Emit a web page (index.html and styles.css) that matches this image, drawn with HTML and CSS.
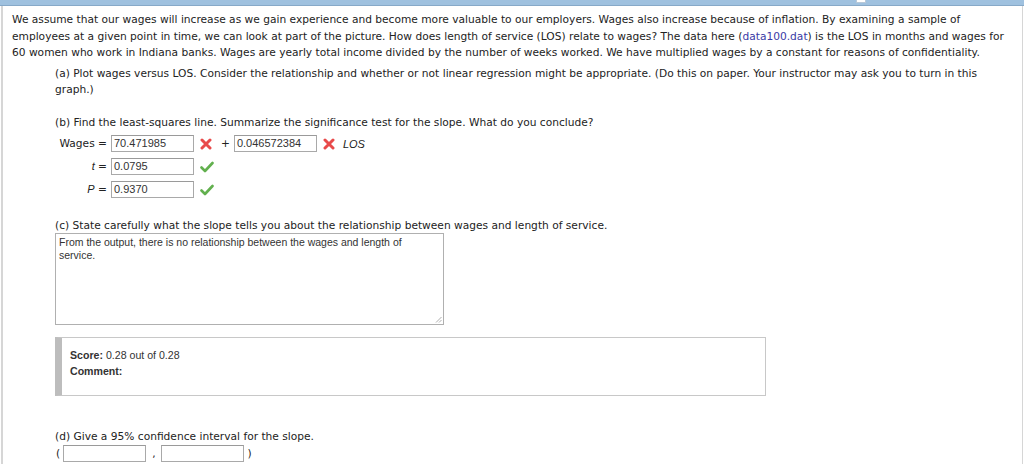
FILE: index.html
```html
<!DOCTYPE html>
<html>
<head>
<meta charset="utf-8">
<link rel="stylesheet" href="styles.css">
</head>
<body>
<div class="topbar"><span class="tab"></span></div>
<div class="frame">
  <p class="intro">We assume that our wages will increase as we gain experience and become more valuable to our employers. Wages also increase because of inflation. By examining a sample of employees at a given point in time, we can look at part of the picture. How does length of service (LOS) relate to wages? The data here (<a class="link">data100.dat</a>) is the LOS in months and wages for 60 women who work in Indiana banks. Wages are yearly total income divided by the number of weeks worked. We have multiplied wages by a constant for reasons of confidentiality.</p>

  <div class="part">
    <p class="q qa">(a) Plot wages versus LOS. Consider the relationship and whether or not linear regression might be appropriate. (Do this on paper. Your instructor may ask you to turn in this graph.)</p>

    <p class="q qb">(b) Find the least-squares line. Summarize the significance test for the slope. What do you conclude?</p>
    <div class="rows">
      <div class="row">
        <span class="lbl">Wages =</span>
        <span class="inp">70.471985</span>
        <svg class="mark" width="12" height="12" viewBox="0 0 12 12"><path d="M2 2 L10 10 M10 2 L2 10" stroke="#e84a4a" stroke-width="3" stroke-linecap="round"/></svg>
        <span class="plus">+</span>
        <span class="inp">0.046572384</span>
        <svg class="mark" width="12" height="12" viewBox="0 0 12 12"><path d="M2 2 L10 10 M10 2 L2 10" stroke="#e84a4a" stroke-width="3" stroke-linecap="round"/></svg>
        <span class="var">LOS</span>
      </div>
      <div class="row">
        <span class="lbl"><i>t</i> =</span>
        <span class="inp">0.0795</span>
        <svg class="mark chk" width="14" height="12" viewBox="0 0 14 12"><path d="M1.5 6.5 L5 10 L12.5 2" fill="none" stroke="#62b04e" stroke-width="2.6" stroke-linecap="round" stroke-linejoin="round"/></svg>
      </div>
      <div class="row">
        <span class="lbl"><i>P</i> =</span>
        <span class="inp">0.9370</span>
        <svg class="mark chk" width="14" height="12" viewBox="0 0 14 12"><path d="M1.5 6.5 L5 10 L12.5 2" fill="none" stroke="#62b04e" stroke-width="2.6" stroke-linecap="round" stroke-linejoin="round"/></svg>
      </div>
    </div>

    <p class="q qc">(c) State carefully what the slope tells you about the relationship between wages and length of service.</p>
    <div class="textarea">From the output, there is no relationship between the wages and length of service.<svg class="grip" width="7" height="7" viewBox="0 0 7 7"><path d="M6.5 1 L1 6.5 M6.5 4 L4 6.5" stroke="#999" stroke-width="0.8"/></svg></div>

    <div class="score">
      <div><b>Score:</b> 0.28 out of 0.28</div>
      <div><b>Comment:</b></div>
    </div>

    <p class="q qd">(d) Give a 95% confidence interval for the slope.</p>
    <div class="ci">
      <span class="paren">(</span>
      <span class="inp empty"></span>
      <span class="comma">,</span>
      <span class="inp empty"></span>
      <span class="paren">)</span>
    </div>
  </div>
</div>
</body>
</html>
```
FILE: styles.css
```css
html, body {
  margin: 0;
  padding: 0;
  background: #fff;
}
body {
  width: 1024px;
  height: 464px;
  overflow: hidden;
  font-family: "DejaVu Sans", Verdana, sans-serif;
  font-size: 10.65px;
  color: #222;
}
.topbar {
  height: 5px;
  background: #9fc1df;
  border-bottom: 1px solid #87a9c8;
  display: flex;
}
.tab {
  margin-left: 856px;
  width: 8px;
  height: 2px;
  background: #fff;
  border: 1px solid #b8c8d8;
  border-top: none;
}
.frame {
  margin-left: 1px;
  width: 1019px;
  height: 460px;
  border-left: 2px solid #d6d6d6;
  border-right: 1px solid #d6d6d6;
}
p { margin: 0; }
.intro {
  padding: 6px 8px 0 9px;
  line-height: 16.5px;
}
.link { color: #3a3aa6; }
.part { padding-left: 52px; }
.q { line-height: 16.5px; }
.qa { margin-top: 4px; padding-right: 30px; }
.qb { margin-top: 16px; }
.rows {
  display: flex;
  flex-direction: column;
  gap: 6px;
  margin-top: 4px;
}
.row {
  display: flex;
  align-items: center;
  height: 17px;
}
.lbl {
  width: 52px;
  text-align: right;
  padding-right: 4px;
}
.lbl i { font-family: "Liberation Sans", Arial, sans-serif; font-size: 11px; }
.inp {
  box-sizing: border-box;
  width: 83px;
  height: 17px;
  border: 1px solid #a9a9a9;
  border-top-color: #9a9a9a;
  font-family: "Liberation Sans", Arial, sans-serif;
  font-size: 11px;
  line-height: 15px;
  padding-left: 2px;
  color: #333;
}
.mark { margin-left: 6px; }
.plus { margin-left: 9px; margin-right: 4px; }
.var {
  margin-left: 8px;
  font-style: italic;
  font-family: "Liberation Sans", Arial, sans-serif;
  font-size: 11px;
}
.qc { margin-top: 20px; line-height: 15px; }
.textarea {
  position: relative;
  box-sizing: border-box;
  width: 389px;
  height: 92px;
  border: 1px solid #b0b0b0;
  padding: 2px 20px 2px 3px;
  font-family: "Liberation Sans", Arial, sans-serif;
  font-size: 10.5px;
  line-height: 13px;
  color: #333;
}
.grip { position: absolute; right: 1px; bottom: 1px; }
.score {
  box-sizing: border-box;
  width: 711px;
  height: 59px;
  margin-top: 12px;
  border: 1px solid #c8c8c8;
  border-left: 7px solid #bdbdbd;
  padding: 9px 0 0 8px;
  font-family: "Liberation Sans", Arial, sans-serif;
  font-size: 10.6px;
  line-height: 16px;
  color: #333;
}
.qd { margin-top: 33px; line-height: 15px; }
.ci {
  display: flex;
  align-items: center;
  height: 17px;
  margin-top: 1px;
}
.paren { margin-left: 1px; margin-right: 3px; }
.comma { margin: 0 5px 0 6px; }
.ci .paren:last-child { margin-left: 4px; }
```
